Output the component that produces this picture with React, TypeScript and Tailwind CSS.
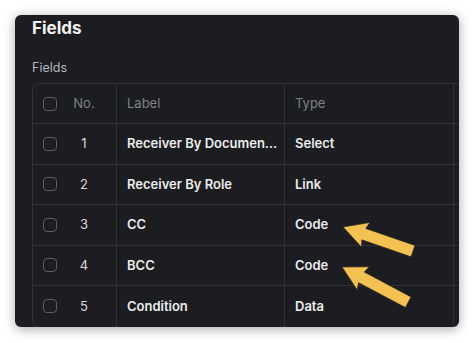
const rows = [
  { no: 1, label: 'Receiver By Document Field', type: 'Select' },
  { no: 2, label: 'Receiver By Role', type: 'Link' },
  { no: 3, label: 'CC', type: 'Code' },
  { no: 4, label: 'BCC', type: 'Code' },
  { no: 5, label: 'Condition', type: 'Data' },
];

function Checkbox() {
  return <div className="ml-[10px] h-[14px] w-[14px] shrink-0 rounded-[4px] border border-[#5b5d62]" />;
}

// arrow drawn from its tip, local +x runs toward the tail
function Arrow({ x, y, angle, len }: { x: number; y: number; angle: number; len: number }) {
  const pts = `0,0 24,-13 22,-6 ${len},-6 ${len},6 22,6 24,13`;
  return (
    <polygon
      points={pts}
      transform={`translate(${x} ${y}) rotate(${angle})`}
      fill="#f4c252"
      stroke="#2a2418"
      strokeWidth="0.6"
      strokeLinejoin="round"
    />
  );
}

export default function App() {
  return (
    <div className="relative h-[343px] w-[474px] overflow-hidden bg-white font-['Inter',sans-serif]">
      <div className="mx-[15px] mt-[15px] h-[312px] overflow-hidden rounded-md bg-[#1b1d21] pl-[17px] shadow-[0_2px_12px_rgba(0,0,0,0.35)]">
        <h1 className="pt-[1px] text-[17px] font-bold leading-6 text-[#f3f3f3]">Fields</h1>
        <p className="mt-[20px] text-[12.5px] leading-4 text-[#b4b6ba]">Fields</p>

        {/* table */}
        <div className="mt-[7px] w-[520px] rounded-lg border border-[#303237] text-[13px]">
          <div className="flex h-[40px] items-center border-b border-[#303237] text-[#7f8186]">
            <div className="flex h-full w-[84px] items-center border-r border-[#303237]">
              <Checkbox />
              <span className="w-[54px] text-center">No.</span>
            </div>
            <div className="flex h-full w-[168px] items-center border-r border-[#303237] pl-[10px]">Label</div>
            <div className="flex h-full w-[169px] items-center border-r border-[#303237] pl-[10px]">Type</div>
            <div className="h-full flex-1" />
          </div>
          {rows.map((r, i) => (
            <div
              key={r.no}
              className={`flex h-[40.5px] items-center text-[#ececec] ${i < rows.length - 1 ? 'border-b border-[#303237]' : ''}`}
            >
              <div className="flex h-full w-[84px] items-center border-r border-[#303237]">
                <Checkbox />
                <span className="w-[54px] text-center text-[#d8d9db]">{r.no}</span>
              </div>
              <div className="flex h-full w-[168px] min-w-0 items-center border-r border-[#303237] pl-[10px] pr-[5px] font-semibold">
                <span className="min-w-0 truncate">{r.label}</span>
              </div>
              <div className="flex h-full w-[169px] items-center border-r border-[#303237] pl-[10px] font-semibold">
                {r.type}
              </div>
              <div className="h-full flex-1" />
            </div>
          ))}
        </div>
      </div>

      <svg className="pointer-events-none absolute inset-0" width="474" height="343">
        <Arrow x={343} y={227} angle={19} len={74} />
        <Arrow x={342} y={267} angle={28} len={75} />
      </svg>
    </div>
  );
}
